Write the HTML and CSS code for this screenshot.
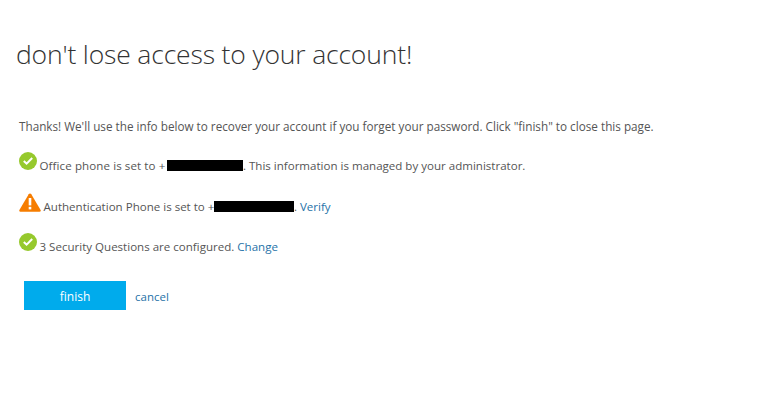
FILE: index.html
```html
<!DOCTYPE html>
<html lang="en">
<head>
<meta charset="utf-8">
<title>don't lose access to your account!</title>
<link rel="stylesheet" href="styles.css">
</head>
<body>
<main class="page">
  <h1 class="title">don't lose access to your account!</h1>
  <p class="intro">Thanks! We'll use the info below to recover your account if you forget your password. Click "finish" to close this page.</p>
  <ul class="status-list">
    <li class="status status-office">
      <svg class="icon" width="18" height="18" viewBox="0 0 18 18" aria-hidden="true"><circle cx="9" cy="9" r="9" fill="#96c92d"/><path d="M4.8 9 7.6 11.7 13.2 6" fill="none" stroke="#fff" stroke-width="2"/></svg>
      <span class="text"><span class="prefix">Office phone is set to +</span><span class="redact redact-office"></span>. This information is managed by your administrator.</span>
    </li>
    <li class="status status-auth">
      <svg class="icon" width="22" height="19" viewBox="0 0 22 19" aria-hidden="true"><path d="M11 .5C11.6.5 12 .8 12.3 1.3L21.6 17C22 17.8 21.6 18.7 20.6 18.7H1.4C.4 18.7 0 17.8.4 17L9.7 1.3C10 .8 10.4.5 11 .5Z" fill="#f67d00"/><rect x="9.7" y="5" width="2.6" height="7.4" fill="#fff"/><rect x="9.7" y="13.8" width="2.6" height="2.6" fill="#fff"/></svg>
      <span class="text">Authentication Phone is set to +<span class="redact redact-auth"></span>. <a href="#">Verify</a></span>
    </li>
    <li class="status status-questions">
      <svg class="icon" width="18" height="18" viewBox="0 0 18 18" aria-hidden="true"><circle cx="9" cy="9" r="9" fill="#96c92d"/><path d="M4.8 9 7.6 11.7 13.2 6" fill="none" stroke="#fff" stroke-width="2"/></svg>
      <span class="text">3 Security Questions are configured. <a href="#">Change</a></span>
    </li>
  </ul>
  <div class="actions">
    <button class="finish" type="button">finish</button>
    <a class="cancel" href="#">cancel</a>
  </div>
</main>
</body>
</html>
```
FILE: styles.css
```css
* { box-sizing: border-box; }
html, body { margin: 0; background: #fff; }
body { width: 760px; height: 412px; overflow: hidden; font-family: "Open Sans", sans-serif; color: #555; }
.page { padding: 35px 0 0 16px; }
.title { margin: 0; font-size: 26.5px; letter-spacing: -0.16px; line-height: 38px; font-weight: 300; color: #333; }
.intro { margin: 44px 0 0 3px; font-size: 11.72px; line-height: 18px; }
.status-list { list-style: none; margin: 17px 0 0 3px; padding: 0; font-size: 11.55px; }
.status { display: flex; align-items: flex-start; height: 40.5px; }
.icon { flex: none; margin-right: 2.5px; }
.text { padding-top: 5px; line-height: 18px; white-space: nowrap; }
.prefix { letter-spacing: 0.1px; }
.redact { display: inline-block; height: 11px; background: #000; vertical-align: -1px; }
.redact-office { width: 76px; margin-left: 1.5px; }
.redact-auth { width: 79.5px; }
a { color: #2672a8; text-decoration: none; }
.actions { display: flex; align-items: center; gap: 9px; margin: 7px 0 0 8px; }
.finish { width: 102px; height: 29px; border: 0; padding: 2px 0 0; background: #00abec; color: #fff; font: 12px "Open Sans", sans-serif; }
.cancel { font-size: 11.5px; padding-top: 2px; }
```
